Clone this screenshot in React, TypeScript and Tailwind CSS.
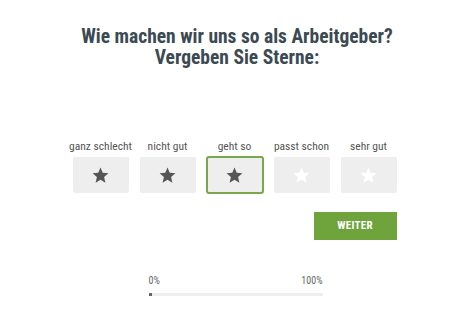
import React from "react";

const OPTIONS = [
  { label: "ganz schlecht", on: true },
  { label: "nicht gut", on: true },
  { label: "geht so", on: true, selected: true },
  { label: "passt schon", on: false },
  { label: "sehr gut", on: false },
];

const FONT = {
  fontFamily: '"Roboto Condensed", "Liberation Sans Narrow", "DejaVu Sans Condensed", Roboto, sans-serif',
};

function StarIcon({ on }: { on: boolean }) {
  return (
    <svg viewBox="0 0 24 24" className="w-[19px] h-[19px]" aria-hidden="true">
      <path
        d="M12 17.27L18.18 21l-1.64-7.03L22 9.24l-7.19-.61L12 2 9.19 8.63 2 9.24l5.46 4.73L5.82 21z"
        fill={on ? "#555555" : "#ffffff"}
      />
    </svg>
  );
}

export default function App() {
  return (
    <div className="w-[474px] h-[322px] bg-white flex flex-col items-center" style={FONT}>
      <h1 className="mt-[26px] text-center text-[19.5px] leading-[21px] font-bold text-[#3b4a52] [font-stretch:condensed]">
        Wie machen wir uns so als Arbeitgeber?
        <br />
        Vergeben Sie Sterne:
      </h1>

      {/* Sterne */}
      <div className="mt-[71px] mr-[5px] grid grid-cols-[repeat(5,56px)] gap-x-[11px]">
        {OPTIONS.map((o) => (
          <div key={o.label} className="flex flex-col items-center">
            <span className="whitespace-nowrap text-[11.5px] leading-[14px] text-[#555] [font-stretch:condensed]">
              {o.label}
            </span>
            <div
              className={
                o.selected
                  ? "mt-[3px] w-[58px] h-[38px] -mx-[1px] bg-[#eeeeee] border-2 border-[#7aa64c] rounded-[3px] flex items-center justify-center"
                  : "mt-[4px] w-[56px] h-[36px] bg-[#eeeeee] rounded-[2px] flex items-center justify-center"
              }
            >
              <StarIcon on={o.on} />
            </div>
          </div>
        ))}
      </div>

      <div className="w-[324px] mr-[5px] flex justify-end mt-[18px]">
        <button className="w-[83px] h-[28px] bg-[#6fa33b] text-white text-[11px] font-bold tracking-wide [font-stretch:condensed]">
          WEITER
        </button>
      </div>

      {/* Fortschritt */}
      <div className="w-[174px] mt-[35px] ml-[-3px]">
        <div className="flex justify-between text-[10px] leading-[12px] text-[#666] [font-stretch:condensed]">
          <span>0%</span>
          <span>100%</span>
        </div>
        <div className="mt-[6px] h-[3px] bg-[#eeeeee] rounded-full">
          <div className="h-[3px] w-[3px] bg-[#666]" />
        </div>
      </div>
    </div>
  );
}
